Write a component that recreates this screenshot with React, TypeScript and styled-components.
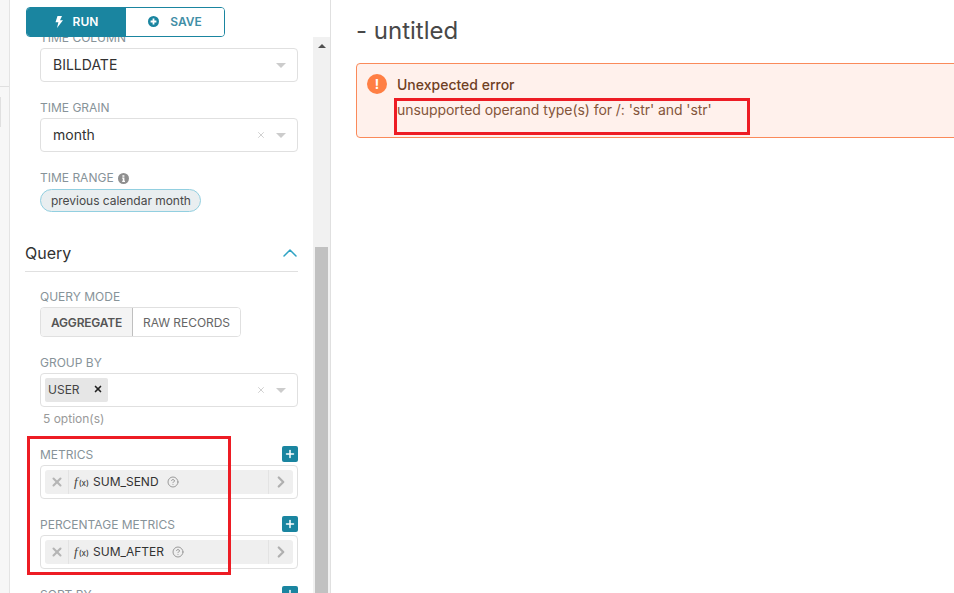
import React from 'react';
import styled, { createGlobalStyle } from 'styled-components';
import { ChevronUp, ChevronRight, Plus, X, HelpCircle } from 'lucide-react';

const GlobalStyle = createGlobalStyle`
    html, body {
        margin: 0;
        padding: 0;
        height: 100%;
        overflow: hidden;
        background: #fff;
    }
    body {
        font-family: Inter, "Liberation Sans", sans-serif;
        color: #323232;
    }
`;

const Page = styled.div`
    position: relative;
    display: flex;
    width: 954px;
    height: 593px;
    overflow: hidden;
`;

const LeftStrip = styled.div`
    flex: 0 0 9px;
    background: #f7f7f7;
    border-right: 1px solid #e4e4e4;
    padding-top: 86px;
    box-sizing: content-box;
`;

const StripLine = styled.div`
    height: 1px;
    background: #e0e0e0;
`;

const StripHandle = styled.div`
    width: 1px;
    height: 30px;
    margin-top: 10px;
    background: #e0e0e0;
`;

const Panel = styled.aside`
    flex: 0 0 320px;
    display: flex;
    flex-direction: column;
    border-right: 1px solid #e0e0e0;
    background: #fff;
`;

const ButtonBar = styled.div`
    flex: 0 0 37px;
    position: relative;
    z-index: 1;
    display: flex;
    align-items: flex-end;
    padding-left: 16px;
`;

const ButtonGroup = styled.div`
    display: flex;
    width: 199px;
    height: 30px;
    box-sizing: border-box;
    border: 1px solid #1a85a0;
    border-radius: 4px;
    overflow: hidden;
    background: #fff;
`;

const ActionButton = styled.div<{ $primary?: boolean }>`
    display: flex;
    align-items: center;
    justify-content: center;
    gap: ${p => (p.$primary ? '10px' : '11px')};
    width: ${p => (p.$primary ? '99px' : '98px')};
    padding-bottom: 1px;
    box-sizing: border-box;
    background: ${p => (p.$primary ? '#1a85a0' : '#fff')};
    color: ${p => (p.$primary ? '#fff' : '#3f8ea6')};
    font-size: 12px;
    font-weight: 600;
`;

const ButtonIcon = styled.svg`
    flex: none;
    display: block;
`;

const Body = styled.div`
    flex: 1;
    display: flex;
    min-height: 0;
`;

const ScrollArea = styled.div`
    flex: 1;
    overflow: hidden;
    padding: 0 15px;
`;

const Form = styled.div`
    margin-top: -8px;
    display: flex;
    flex-direction: column;
`;

const Scrollbar = styled.div`
    flex: 0 0 17px;
    display: flex;
    flex-direction: column;
    background: #f1f1f1;
`;

const ScrollUp = styled.div`
    height: 210px;
    display: flex;
    justify-content: center;
    padding-top: 7px;
    box-sizing: border-box;
`;

const ArrowUp = styled.div`
    width: 0;
    height: 0;
    border-left: 4px solid transparent;
    border-right: 4px solid transparent;
    border-bottom: 4px solid #505050;
`;

const ScrollThumb = styled.div`
    flex: 1;
    margin: 0 2px;
    background: #c1c1c1;
`;

const Field = styled.div<{ $gap?: number }>`
    padding-left: 15px;
    margin-bottom: ${p => p.$gap ?? 17}px;
`;

const LabelRow = styled.div`
    display: flex;
    justify-content: space-between;
    align-items: center;
    height: 16px;
    margin-bottom: 3px;
`;

const Label = styled.span`
    display: flex;
    align-items: center;
    gap: 4px;
    padding-top: 2px;
    font-size: 12px;
    line-height: 16px;
    color: #879399;
`;

const InfoIcon = styled.svg`
    display: block;
    flex: none;
`;

const SelectBox = styled.div`
    display: flex;
    align-items: center;
    height: 34px;
    box-sizing: border-box;
    padding: 0 11px 0 12px;
    border: 1px solid #e0e0e0;
    border-radius: 4px;
    font-size: 14px;
    color: #323232;
`;

const SelectValue = styled.span`
    flex: 1;
    padding-bottom: 2px;
`;

const ClearIcon = styled(X)`
    color: #c8c8c8;
    margin-right: 10px;
`;

const Caret = styled.span`
    width: 0;
    height: 0;
    border-left: 5px solid transparent;
    border-right: 5px solid transparent;
    border-top: 5px solid #ccc;
    margin-top: 1px;
`;

const Pill = styled.span`
    display: inline-block;
    height: 23px;
    margin-top: 1px;
    box-sizing: border-box;
    padding: 0 9px 0 10px;
    border: 1px solid #92cfe0;
    border-radius: 12px;
    background: #e9eef0;
    font-size: 12px;
    line-height: 21px;
    letter-spacing: -0.03px;
    color: #484848;
    white-space: nowrap;
`;

const SectionHeader = styled.div`
    display: flex;
    justify-content: space-between;
    align-items: center;
    height: 37px;
    margin-bottom: 16px;
    border-bottom: 1px solid #e0e0e0;
    font-size: 16px;
    color: #323232;
`;

const SectionChevron = styled(ChevronUp)`
    color: #2fa3c4;
    margin-right: -4px;
`;

const PillField = styled(Field)`
    margin-bottom: 22px;
`;

const ModeGroup = styled.div`
    display: inline-flex;
    height: 30px;
    box-sizing: border-box;
    border: 1px solid #e0e0e0;
    border-radius: 4px;
    overflow: hidden;
    vertical-align: top;
`;

const ModeButton = styled.div<{ $active?: boolean }>`
    display: flex;
    align-items: center;
    padding: 0 10px;
    font-size: 12px;
    font-weight: ${p => (p.$active ? 600 : 400)};
    letter-spacing: ${p => (p.$active ? '-0.2px' : '-0.05px')};
    color: ${p => (p.$active ? '#555' : '#666')};
    background: ${p => (p.$active ? '#f4f4f4' : '#fff')};
    border-right: ${p => (p.$active ? '1px solid #bfbfbf' : 'none')};
`;

const TagBox = styled.div`
    display: flex;
    align-items: center;
    height: 34px;
    box-sizing: border-box;
    padding: 0 11px 0 4px;
    border: 1px solid #e0e0e0;
    border-radius: 4px;
`;

const Tag = styled.div`
    display: flex;
    align-items: center;
    justify-content: space-between;
    width: 63px;
    height: 24px;
    box-sizing: border-box;
    padding: 0 5px 2px 3px;
    border-radius: 2px;
    background: #e6e6e6;
    font-size: 12px;
    color: #444;
`;

const Spacer = styled.div`
    flex: 1;
`;

const HelpText = styled.div`
    margin: 4px 0 0 3px;
    font-size: 12px;
    line-height: 16px;
    color: #999;
`;

const AddButton = styled.div`
    display: flex;
    align-items: center;
    justify-content: center;
    width: 16px;
    height: 16px;
    border-radius: 2px;
    background: #1a85a0;
    color: #fff;
`;

const MetricBox = styled.div`
    height: 34px;
    box-sizing: border-box;
    padding: 4px;
    border: 1px solid #e0e0e0;
    border-radius: 4px;
`;

const MetricChip = styled.div`
    display: flex;
    align-items: center;
    height: 24px;
    border-radius: 3px;
    background: #efefef;
    font-size: 12px;
    color: #323232;
`;

const ChipRemove = styled.div`
    display: flex;
    align-items: center;
    justify-content: center;
    flex: 0 0 23px;
    height: 100%;
    border-right: 1px solid #e3e3e3;
    color: #b5b5b5;
`;

const ChipName = styled.div`
    flex: 1;
    display: flex;
    align-items: center;
    padding: 0 0 1px 4px;
`;

const FxMark = styled.span`
    display: inline-flex;
    align-items: baseline;
    width: 20px;
    padding-left: 1px;
    box-sizing: border-box;
    color: #444;
`;

const FxLetter = styled.i`
    font-family: "Liberation Serif", serif;
    font-size: 13px;
    margin-right: 1px;
`;

const FxArgs = styled.span`
    font-size: 8px;
    font-weight: 500;
`;

const ChipHelp = styled(HelpCircle)`
    color: #9a9a9a;
    margin-left: 8px;
`;

const ChipMore = styled.div`
    display: flex;
    align-items: center;
    justify-content: center;
    flex: 0 0 24px;
    height: 100%;
    border-left: 1px solid #e3e3e3;
    color: #b0b0b0;
`;

const Main = styled.main`
    flex: 1;
    min-width: 0;
    padding: 15px 0 0 25px;
`;

const Title = styled.h1`
    margin: 0 0 17px;
    font-size: 24px;
    line-height: 31px;
    font-weight: 400;
    color: #484848;
`;

const Alert = styled.div`
    display: flex;
    gap: 10px;
    height: 75px;
    box-sizing: border-box;
    margin-right: -10px;
    padding: 10px;
    border: 1px solid #fa8a5a;
    border-radius: 4px;
    background: #fff1ec;
`;

const AlertIcon = styled.div`
    flex: 0 0 20px;
    height: 20px;
    border-radius: 50%;
    background: #ff7f44;
    color: #fff;
    font-size: 13px;
    font-weight: 700;
    line-height: 20px;
    text-align: center;
`;

const AlertBody = styled.div`
    display: flex;
    flex-direction: column;
    gap: 5px;
`;

const AlertTitle = styled.div`
    font-size: 14px;
    line-height: 22px;
    font-weight: 500;
    color: #6f3f24;
`;

const AlertMessage = styled.div`
    font-size: 14px;
    line-height: 17px;
    letter-spacing: -0.06px;
    color: #84553a;
`;

// the red boxes someone drew on top of the screenshot
const Annotation = styled.div<{ $x: number; $y: number; $w: number; $h: number }>`
    position: absolute;
    left: ${p => p.$x}px;
    top: ${p => p.$y}px;
    width: ${p => p.$w}px;
    height: ${p => p.$h}px;
    box-sizing: border-box;
    border: 3px solid #ed1c24;
    pointer-events: none;
`;

const Metric = ({ label, name }: { label: string; name: string }) => (
    <Field>
        <LabelRow>
            <Label>{label}</Label>
            <AddButton>
                <Plus size={12} strokeWidth={3} />
            </AddButton>
        </LabelRow>
        <MetricBox>
            <MetricChip>
                <ChipRemove>
                    <X size={14} strokeWidth={3.5} />
                </ChipRemove>
                <ChipName>
                    <FxMark>
                        <FxLetter>f</FxLetter>
                        <FxArgs>(x)</FxArgs>
                    </FxMark>
                    {name}
                    <ChipHelp size={12} />
                </ChipName>
                <ChipMore>
                    <ChevronRight size={18} strokeWidth={3} />
                </ChipMore>
            </MetricChip>
        </MetricBox>
    </Field>
);

const App = () => (
    <Page>
        <GlobalStyle />
        <LeftStrip>
            <StripLine />
            <StripHandle />
        </LeftStrip>
        <Panel>
            <ButtonBar>
                <ButtonGroup>
                    <ActionButton $primary>
                        <ButtonIcon width="8" height="12" viewBox="0 0 8 12">
                            <path d="M2.5 0H7L5 4.2H8L2 12L3.4 6.2H0.5Z" fill="#fff" />
                        </ButtonIcon>
                        RUN
                    </ActionButton>
                    <ActionButton>
                        <ButtonIcon width="11" height="11" viewBox="0 0 11 11">
                            <circle cx="5.5" cy="5.5" r="5.5" fill="#1a85a0" />
                            <path d="M5.5 2.6V8.4M2.6 5.5H8.4" stroke="#fff" strokeWidth="1.8" />
                        </ButtonIcon>
                        SAVE
                    </ActionButton>
                </ButtonGroup>
            </ButtonBar>
            <Body>
                <ScrollArea>
                    <Form>
                        <Field>
                            <LabelRow>
                                <Label>TIME COLUMN</Label>
                            </LabelRow>
                            <SelectBox>
                                <SelectValue>BILLDATE</SelectValue>
                                <Caret />
                            </SelectBox>
                        </Field>
                        <Field>
                            <LabelRow>
                                <Label>TIME GRAIN</Label>
                            </LabelRow>
                            <SelectBox>
                                <SelectValue>month</SelectValue>
                                <ClearIcon size={10} />
                                <Caret />
                            </SelectBox>
                        </Field>
                        <PillField>
                            <LabelRow>
                                <Label>
                                    TIME RANGE
                                    <InfoIcon width="11" height="11" viewBox="0 0 11 11">
                                        <circle cx="5.5" cy="5.5" r="5.5" fill="#8f8f8f" />
                                        <path d="M4.4 2.2h2v1.5h-2zM4.2 4.6h2.2v3.2h.6v1.2H4.2V7.8h.6V5.8h-.6z" fill="#fff" />
                                    </InfoIcon>
                                </Label>
                            </LabelRow>
                            <Pill>previous calendar month</Pill>
                        </PillField>
                        <SectionHeader>
                            Query
                            <SectionChevron size={24} strokeWidth={1.5} />
                        </SectionHeader>
                        <Field>
                            <LabelRow>
                                <Label>QUERY MODE</Label>
                            </LabelRow>
                            <ModeGroup>
                                <ModeButton $active>AGGREGATE</ModeButton>
                                <ModeButton>RAW RECORDS</ModeButton>
                            </ModeGroup>
                        </Field>
                        <Field $gap={19}>
                            <LabelRow>
                                <Label>GROUP BY</Label>
                            </LabelRow>
                            <TagBox>
                                <Tag>
                                    USER
                                    <X size={10} strokeWidth={4} color="#222" />
                                </Tag>
                                <Spacer />
                                <ClearIcon size={10} />
                                <Caret />
                            </TagBox>
                            <HelpText>5 option(s)</HelpText>
                        </Field>
                        <Metric label="METRICS" name="SUM_SEND" />
                        <Metric label="PERCENTAGE METRICS" name="SUM_AFTER" />
                        <Field>
                            <LabelRow>
                                <Label>SORT BY</Label>
                                <AddButton>
                                    <Plus size={12} strokeWidth={3} />
                                </AddButton>
                            </LabelRow>
                        </Field>
                    </Form>
                </ScrollArea>
                <Scrollbar>
                    <ScrollUp>
                        <ArrowUp />
                    </ScrollUp>
                    <ScrollThumb />
                </Scrollbar>
            </Body>
        </Panel>
        <Main>
            <Title>- untitled</Title>
            <Alert>
                <AlertIcon>!</AlertIcon>
                <AlertBody>
                    <AlertTitle>Unexpected error</AlertTitle>
                    <AlertMessage>unsupported operand type(s) for /: 'str' and 'str'</AlertMessage>
                </AlertBody>
            </Alert>
        </Main>
        <Annotation $x={27} $y={436} $w={204} $h={139} />
        <Annotation $x={394} $y={98} $w={356} $h={37} />
    </Page>
);

export default App;
